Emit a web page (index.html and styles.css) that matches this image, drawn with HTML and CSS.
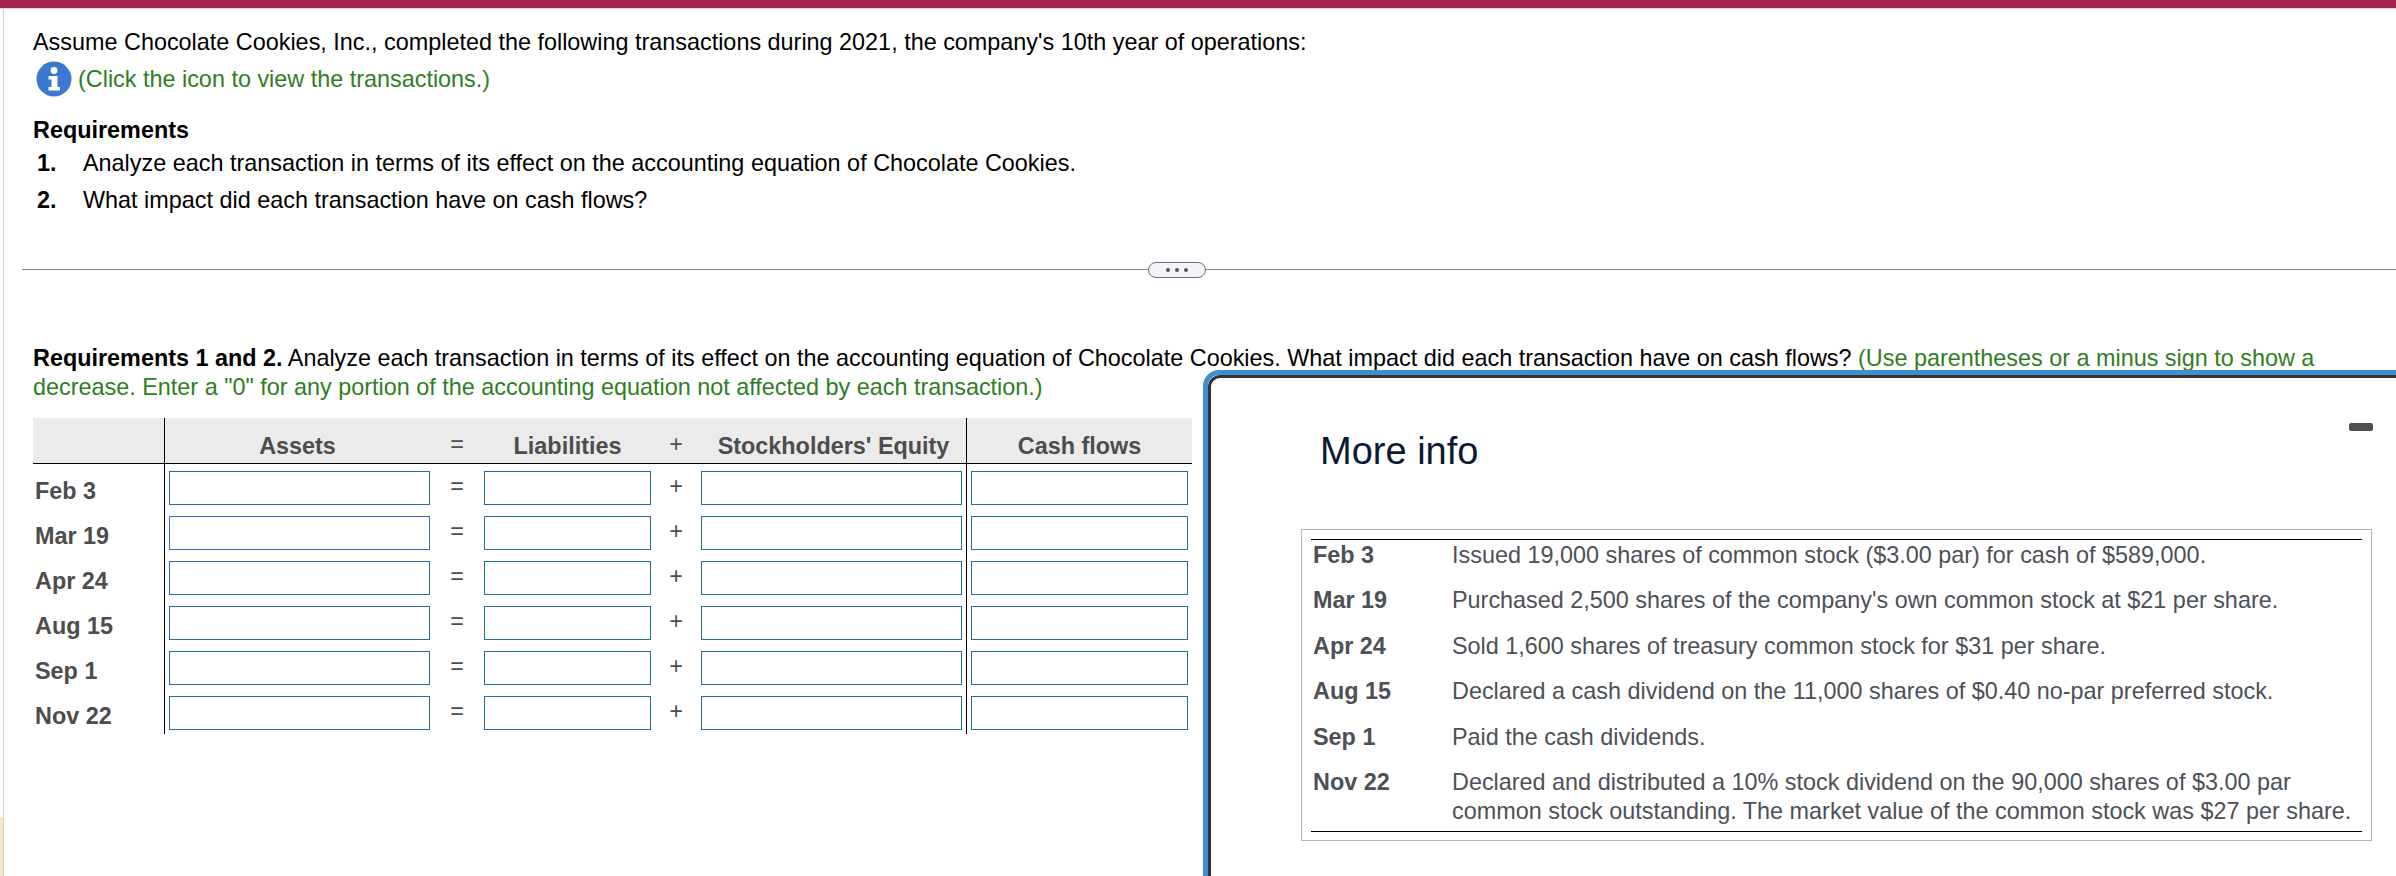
FILE: index.html
```html
<!DOCTYPE html>
<html lang="en">
<head>
    <meta charset="UTF-8">
    <title>Chocolate Cookies, Inc.</title>
    <link rel="stylesheet" href="styles.css">
</head>
<body>
    <div class="top-bar"></div>
    <div class="side-mark"></div>

    <div class="content">
        <p class="intro">Assume Chocolate Cookies, Inc., completed the following transactions during 2021, the company's 10th year of operations:</p>
        <div class="info-line">
            <svg class="info-icon" viewBox="0 0 36 36" width="36" height="36">
                <circle cx="18" cy="18" r="17.5" fill="#3b78d0"/>
                <circle cx="18" cy="9.5" r="3.4" fill="#fff"/>
                <path d="M12.5 15h9v11h2.5v3.5H12.500v-3.500h3V18.500h-3z" fill="#fff"/>
            </svg>
            <span class="green">(Click the icon to view the transactions.)</span>
        </div>

        <h2 class="req-title">Requirements</h2>
        <ol class="req-list">
            <li><b>1.</b><span>Analyze each transaction in terms of its effect on the accounting equation of Chocolate Cookies.</span></li>
            <li><b>2.</b><span>What impact did each transaction have on cash flows?</span></li>
        </ol>

        <div class="divider">
            <span class="divider-pill"><i></i><i></i><i></i></span>
        </div>

        <p class="question"><b>Requirements 1 and 2.</b> Analyze each transaction in terms of its effect on the accounting equation of Chocolate Cookies. What impact did each transaction have on cash flows? <span class="green">(Use parentheses or a minus sign to show a decrease. Enter a "0" for any portion of the accounting equation not affected by each transaction.)</span></p>

        <table class="answer-table">
            <colgroup>
                <col class="col-date">
                <col class="col-assets">
                <col class="col-eq">
                <col class="col-liab">
                <col class="col-plus">
                <col class="col-equity">
                <col class="col-cash">
            </colgroup>
            <thead>
                <tr>
                    <th class="line-right"></th>
                    <th>Assets</th>
                    <th class="sign">=</th>
                    <th>Liabilities</th>
                    <th class="sign">+</th>
                    <th class="line-right">Stockholders' Equity</th>
                    <th>Cash flows</th>
                </tr>
            </thead>
            <tbody>
                <tr>
                    <td class="date line-right">Feb 3</td>
                    <td><input class="cell-input wide" type="text"></td>
                    <td class="sign">=</td>
                    <td><input class="cell-input mid" type="text"></td>
                    <td class="sign">+</td>
                    <td class="line-right"><input class="cell-input equity" type="text"></td>
                    <td><input class="cell-input cash" type="text"></td>
                </tr>
                <tr>
                    <td class="date line-right">Mar 19</td>
                    <td><input class="cell-input wide focused" type="text"></td>
                    <td class="sign">=</td>
                    <td><input class="cell-input mid" type="text"></td>
                    <td class="sign">+</td>
                    <td class="line-right"><input class="cell-input equity" type="text"></td>
                    <td><input class="cell-input cash" type="text"></td>
                </tr>
                <tr>
                    <td class="date line-right">Apr 24</td>
                    <td><input class="cell-input wide" type="text"></td>
                    <td class="sign">=</td>
                    <td><input class="cell-input mid" type="text"></td>
                    <td class="sign">+</td>
                    <td class="line-right"><input class="cell-input equity" type="text"></td>
                    <td><input class="cell-input cash" type="text"></td>
                </tr>
                <tr>
                    <td class="date line-right">Aug 15</td>
                    <td><input class="cell-input wide" type="text"></td>
                    <td class="sign">=</td>
                    <td><input class="cell-input mid" type="text"></td>
                    <td class="sign">+</td>
                    <td class="line-right"><input class="cell-input equity" type="text"></td>
                    <td><input class="cell-input cash" type="text"></td>
                </tr>
                <tr>
                    <td class="date line-right">Sep 1</td>
                    <td><input class="cell-input wide" type="text"></td>
                    <td class="sign">=</td>
                    <td><input class="cell-input mid" type="text"></td>
                    <td class="sign">+</td>
                    <td class="line-right"><input class="cell-input equity" type="text"></td>
                    <td><input class="cell-input cash" type="text"></td>
                </tr>
                <tr>
                    <td class="date line-right">Nov 22</td>
                    <td><input class="cell-input wide" type="text"></td>
                    <td class="sign">=</td>
                    <td><input class="cell-input mid" type="text"></td>
                    <td class="sign">+</td>
                    <td class="line-right"><input class="cell-input equity" type="text"></td>
                    <td><input class="cell-input cash" type="text"></td>
                </tr>
            </tbody>
        </table>
    </div>

    <!-- popup window, runs off the right and bottom of the page -->
    <div class="more-info">
        <div class="more-info-inner">
            <h1 class="more-title">More info</h1>
            <div class="minimize"></div>
            <div class="info-box">
                <table class="info-table">
                    <tr><th>Feb 3</th><td>Issued 19,000 shares of common stock ($3.00 par) for cash of $589,000.</td></tr>
                    <tr><th>Mar 19</th><td>Purchased 2,500 shares of the company's own common stock at $21 per share.</td></tr>
                    <tr><th>Apr 24</th><td>Sold 1,600 shares of treasury common stock for $31 per share.</td></tr>
                    <tr><th>Aug 15</th><td>Declared a cash dividend on the 11,000 shares of $0.40 no-par preferred stock.</td></tr>
                    <tr><th>Sep 1</th><td>Paid the cash dividends.</td></tr>
                    <tr class="last"><th>Nov 22</th><td>Declared and distributed a 10% stock dividend on the 90,000 shares of $3.00 par common stock outstanding. The market value of the common stock was $27 per share.</td></tr>
                </table>
            </div>
        </div>
    </div>
</body>
</html>
```

FILE: styles.css
```css
html, body {
    height: 876px;
}
body {
    position: relative;
    margin: 0;
    overflow: hidden;
    background: #fff;
    color: #000;
    font-family: "Liberation Sans", Arial, sans-serif;
    font-size: 23.4px;
    line-height: 30px;
}
.top-bar {
    height: 8px;
    background: #a3254c;
    border-bottom: 1px solid #d9d9d9;
}
.side-mark {
    position: absolute;
    left: 0;
    top: 817px;
    width: 3px;
    bottom: 0;
    background: #f9e8bd;
}
.content {
    height: 867px;
    margin-left: 3px;
    padding-left: 29px;
    border-left: 1px solid #d2d2dc;
    overflow: hidden;
}
.green {
    color: #2f7d1f;
}
.intro {
    margin: 0;
    padding-top: 18px;
}
.info-line {
    display: flex;
    align-items: center;
    gap: 6px;
    height: 36px;
    margin-top: 4px;
}
.info-icon {
    flex: none;
    margin-left: 3px;
}
.req-title {
    margin: 0;
    padding-top: 18px;
    font-size: 23.4px;
    line-height: 30px;
    font-weight: bold;
}
.req-list {
    margin: 0;
    padding: 0;
    list-style: none;
}
.req-list li {
    display: flex;
    height: 37px;
    line-height: 37px;
}
.req-list b {
    width: 50px;
    padding-left: 4px;
    box-sizing: border-box;
}
.divider {
    position: relative;
    height: 1px;
    margin: 50px 0 0 -11px;
    background: #7f8793;
}
.divider-pill {
    position: absolute;
    left: 1126px;
    top: -7px;
    display: flex;
    align-items: center;
    justify-content: center;
    gap: 5px;
    width: 58px;
    height: 16px;
    box-sizing: border-box;
    border: 1px solid #667080;
    border-radius: 8px;
    background: #f2f4f7;
}
.divider-pill i {
    width: 4px;
    height: 4px;
    border-radius: 50%;
    background: #555;
}
.question {
    width: 2300px;
    margin: 74px 0 0;
    line-height: 29px;
}
.answer-table {
    table-layout: fixed;
    width: 1159px;
    margin-top: 16px;
    border-spacing: 0;
}
.col-date { width: 132px; }
.col-assets { width: 265px; }
.col-eq { width: 54px; }
.col-liab { width: 167px; }
.col-plus { width: 50px; }
.col-equity { width: 266px; }
.col-cash { width: 225px; }
.answer-table th {
    height: 46px;
    padding: 11px 0 0;
    box-sizing: border-box;
    background: #ebebeb;
    border-bottom: 1px solid #000;
    color: #4d4d4d;
    font-weight: bold;
    text-align: center;
}
.answer-table th.sign {
    padding: 7px 0 0;
    font-weight: normal;
}
.answer-table td {
    height: 45px;
    padding: 0;
    box-sizing: border-box;
}
.answer-table .line-right {
    border-right: 1px solid #000;
}
.answer-table td.date {
    padding: 9px 0 0 2px;
    color: #4d4d4d;
    font-weight: bold;
}
.answer-table td.sign {
    color: #4d4d4d;
    text-align: center;
    padding-bottom: 2px;
}
.cell-input {
    display: block;
    height: 34px;
    margin-top: 2px;
    padding: 0;
    box-sizing: border-box;
    border: 1px solid #256f96;
    background: #fff;
}
.cell-input.focused {
    border-color: #3a6cc0;
}
.cell-input.wide { width: 261px; margin-left: 4px; }
.cell-input.mid { width: 167px; }
.cell-input.equity { width: 261px; }
.cell-input.cash { width: 217px; margin-left: 4px; }

.more-info {
    position: absolute;
    left: 1203px;
    top: 370px;
    width: 1300px;
    height: 620px;
    box-sizing: border-box;
    border: 5px solid #3f8fcb;
    border-radius: 16px;
}
.more-info-inner {
    position: relative;
    height: 100%;
    box-sizing: border-box;
    padding: 51px 0 0 90px;
    border: 3px solid #333;
    border-radius: 12px;
    background: #fff;
}
.more-title {
    margin: 0;
    padding-left: 19px;
    color: #0b1a33;
    font-size: 38px;
    line-height: 44px;
    font-weight: normal;
}
.minimize {
    position: absolute;
    left: 1138px;
    top: 45px;
    width: 24px;
    height: 8px;
    border-radius: 2px;
    background: #4f4f4f;
}
.info-box {
    width: 1071px;
    height: 312px;
    margin-top: 56px;
    padding: 9px;
    box-sizing: border-box;
    border: 1px solid #b5b5b5;
}
.info-table {
    table-layout: fixed;
    width: 100%;
    border-spacing: 0;
    border-top: 1px solid #000;
    border-bottom: 1px solid #000;
    color: #4d5056;
    line-height: 29px;
}
.info-table th {
    width: 139px;
    padding: 1px 0 15px 2px;
    font-weight: bold;
    text-align: left;
    vertical-align: top;
}
.info-table td {
    padding: 1px 0 15.4px;
    vertical-align: top;
}
.info-table .last td,
.info-table .last th {
    padding-bottom: 5px;
}
```
